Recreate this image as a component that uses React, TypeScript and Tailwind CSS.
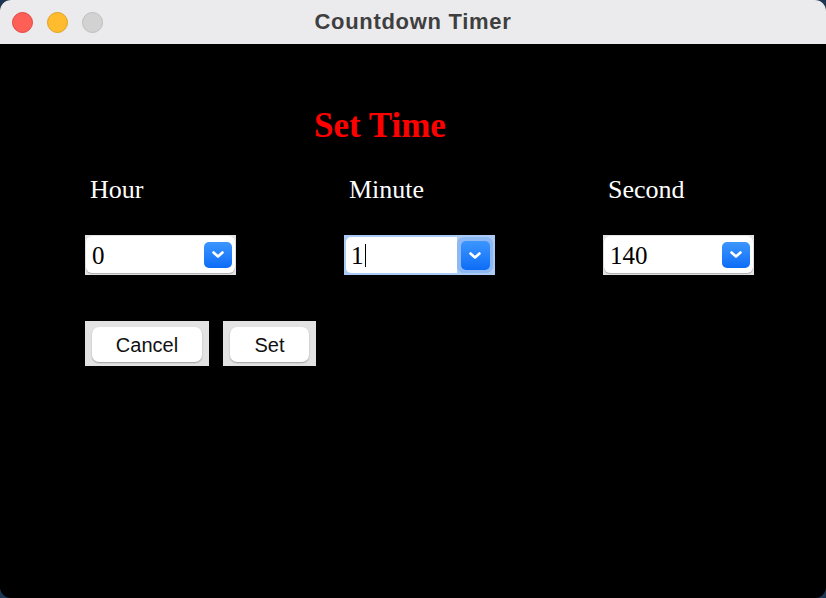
import React from "react";

const serif = { fontFamily: '"Liberation Serif", "Times New Roman", serif' };
const sans = { fontFamily: '"Liberation Sans", Arial, sans-serif' };

function Chevron() {
  return (
    <svg width="14" height="9" viewBox="0 0 14 9" fill="none">
      <polyline points="2.5,2.5 7,6.5 11.5,2.5" stroke="white" strokeWidth="2.6" strokeLinecap="round" strokeLinejoin="round" />
    </svg>
  );
}

function Combo({ value, focused }: { value: string; focused?: boolean }) {
  if (focused) {
    return (
      <div className="w-[151px] h-[40px] bg-[#a9cbf6] p-[2px] flex">
        <div className="flex-1 flex items-center bg-white rounded-l-[5px] pl-[5px]">
          <span className="text-[25px] leading-none text-black pt-[1px]" style={serif}>{value}</span>
          <span className="w-[1.5px] h-[23px] bg-black ml-[1px]" />
        </div>
        <div className="w-[36px] h-full flex items-center justify-center bg-[#8db8f3] rounded-[7px]">
          <div className="w-[29px] h-[29px] rounded-[5px] bg-gradient-to-b from-[#3c96ff] to-[#0b6cf6] flex items-center justify-center">
            <Chevron />
          </div>
        </div>
      </div>
    );
  }
  return (
    <div className="w-[151px] h-[40px] bg-[#e4e4e4] pt-[1px] pb-[2px] px-[1px] flex">
      <div className="flex-1 flex items-center bg-white rounded-[6px] shadow-[0_1px_1px_rgba(0,0,0,0.25)] pl-[6px] pr-[3px]">
        <span className="flex-1 text-[25px] leading-none text-black pt-[1px]" style={serif}>{value}</span>
        <div className="w-[28px] h-[26px] rounded-[5px] bg-gradient-to-b from-[#3c96ff] to-[#0b6cf6] flex items-center justify-center">
          <Chevron />
        </div>
      </div>
    </div>
  );
}

function Btn({ label, w, inner }: { label: string; w: string; inner: string }) {
  return (
    <div className={`${w} h-[45px] bg-[#e3e3e3] pt-[6px] pb-[4px] px-[7px] flex`}>
      <div
        className={`${inner} h-full bg-white rounded-[7px] shadow-[0_1px_1.5px_rgba(0,0,0,0.3)] flex items-center justify-center text-[20px] text-[#111]`}
        style={sans}
      >
        {label}
      </div>
    </div>
  );
}

export default function App() {
  return (
    <div className="w-[826px] h-[598px] bg-[#1b3552]">
      <div className="w-full h-full rounded-[11px] overflow-hidden bg-black flex flex-col">
        <div className="h-[44px] bg-[#ebebed] grid grid-cols-[1fr_auto_1fr] items-center">
          <div className="flex items-center gap-[14px] pl-[12px]">
            <span className="w-[21px] h-[21px] rounded-full bg-[#fe5f57] border border-[#e2463f]" />
            <span className="w-[21px] h-[21px] rounded-full bg-[#febc2e] border border-[#dfa023]" />
            <span className="w-[21px] h-[21px] rounded-full bg-[#d2d2d2] border border-[#bdbdbd]" />
          </div>
          <div className="text-[22px] font-bold text-[#3f3f3f] tracking-[0.7px] pb-[2px]" style={sans}>
            Countdown Timer
          </div>
          <div />
        </div>
        <div className="flex-1 pl-[85px] pt-[64px] flex flex-col">
          <div className="ml-[229px] text-[35px] leading-none font-bold text-[#ff0000]" style={serif}>
            Set Time
          </div>
          <div className="grid grid-cols-[259px_259px_259px] mt-[34px]">
            {["Hour", "Minute", "Second"].map((l) => (
              <div key={l} className="ml-[5px] text-[26px] leading-none text-white" style={serif}>
                {l}
              </div>
            ))}
          </div>
          <div className="grid grid-cols-[259px_259px_259px] mt-[32px]">
            <Combo value="0" />
            <Combo value="1" focused />
            <Combo value="140" />
          </div>
          <div className="flex gap-[14px] mt-[46px]">
            <Btn label="Cancel" w="w-[124px]" inner="w-[110px]" />
            <Btn label="Set" w="w-[93px]" inner="w-[79px]" />
          </div>
        </div>
      </div>
    </div>
  );
}
